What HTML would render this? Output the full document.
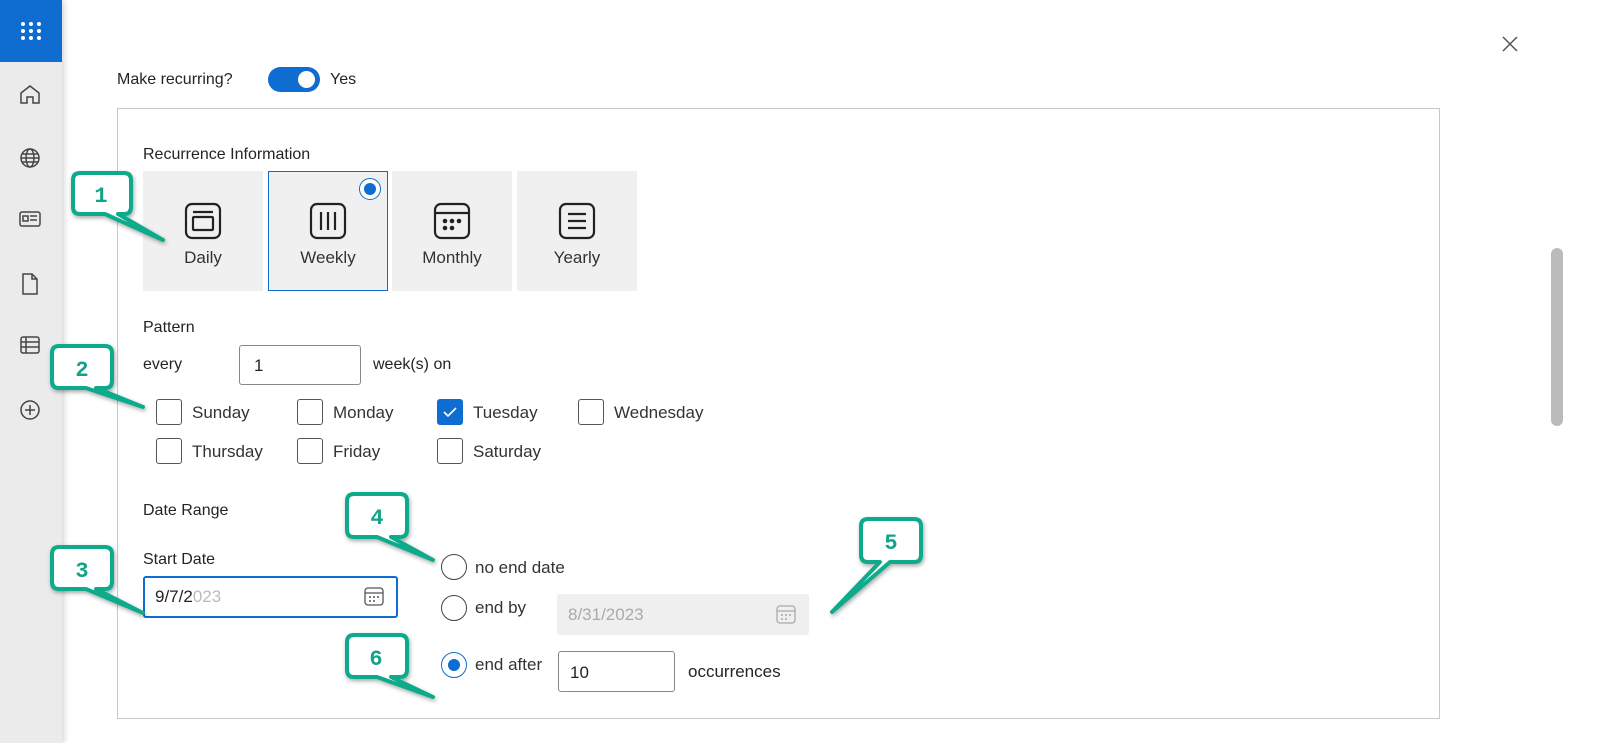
<!DOCTYPE html>
<html><head><meta charset="utf-8"><style>
*{box-sizing:border-box;margin:0;padding:0}
body{width:1600px;height:743px;overflow:hidden;background:#fff;font-family:"Liberation Sans",sans-serif;color:#242424;position:relative}
.abs{position:absolute}
.side{left:0;top:0;width:62px;height:743px;background:#ebebeb;box-shadow:2px 0 6px rgba(0,0,0,.18)}
.tile{position:absolute;top:171px;width:120px;height:120px;background:#f0f0f0;text-align:center;font-size:17px;color:#333}
.tile span{position:absolute;left:0;right:0;top:77px}
.tile svg{position:absolute;left:41px;top:31px}
.lbl{font-size:16px;position:absolute}
.cb{position:absolute;width:26px;height:26px;border:1px solid #555;border-radius:3px;background:#fff}
.day{position:absolute;font-size:17px;color:#333}
.rad{position:absolute;width:26px;height:26px;border:1px solid #444;border-radius:50%}
.inp{position:absolute;border:1px solid #888;border-radius:3px;background:#fff;font-size:17px;padding-left:14px}
</style></head><body>
<div class="abs side"></div>
<div class="abs" style="left:0;top:0;width:62px;height:62px;background:#0f6cd0"></div>
<svg class="abs" style="left:20px;top:21px" width="22" height="20"><g fill="#fff"><circle cx="3" cy="3" r="2"/><circle cx="11" cy="3" r="2"/><circle cx="19" cy="3" r="2"/><circle cx="3" cy="10" r="2"/><circle cx="11" cy="10" r="2"/><circle cx="19" cy="10" r="2"/><circle cx="3" cy="17" r="2"/><circle cx="11" cy="17" r="2"/><circle cx="19" cy="17" r="2"/></g></svg>
<svg class="abs" style="left:18px;top:84px" width="24" height="340" fill="none" stroke="#444" stroke-width="1.5">
<path d="M3 19V9l9-7 9 7v10h-6v-6h-6v6z"/>
<circle cx="12" cy="74" r="9"/><ellipse cx="12" cy="74" rx="4" ry="9"/><path d="M3 74h18M4 70h16M4 78h16"/>
<rect x="2" y="128" width="20" height="14" rx="2"/><path d="M5 132h5v5H5zM12 132h7M12 136h7"/>
<path d="M5 190h9l5 5v15H5z"/><path d="M14 190v5h5"/>
<rect x="3" y="253" width="18" height="16" rx="2"/><path d="M3 258h18M3 263h18M8 253v16"/>
<circle cx="12" cy="326" r="9"/><path d="M12 321v10M7 326h10"/>
</svg>
<svg class="abs" style="left:1502px;top:36px" width="16" height="16" stroke="#555" stroke-width="1.5"><path d="M1 1l14 14M15 1L1 15"/></svg>
<div class="abs" style="left:1551px;top:248px;width:12px;height:178px;background:#bbb;border-radius:6px"></div>

<div class="lbl" style="left:117px;top:71px">Make recurring?</div>
<div class="abs" style="left:268px;top:67px;width:52px;height:25px;border-radius:13px;background:#0f6cd0"></div>
<div class="abs" style="left:298px;top:71px;width:17px;height:17px;border-radius:50%;background:#fff"></div>
<div class="lbl" style="left:330px;top:71px">Yes</div>

<div class="abs" style="left:117px;top:108px;width:1323px;height:611px;border:1px solid #c8c8c8"></div>
<div class="lbl" style="left:143px;top:146px">Recurrence Information</div>

<div class="tile" style="left:143px"><svg width="38" height="38" fill="none" stroke="#222" stroke-width="2.2"><rect x="2" y="2" width="34" height="34" rx="6"/><rect x="9" y="15" width="20" height="13" rx="1"/><path d="M9 10h20"/></svg><span>Daily</span></div>
<div class="tile" style="left:268px;border:1px solid #0f6cd0"><svg width="38" height="38" fill="none" stroke="#222" stroke-width="2.2" style="left:40px;top:30px"><rect x="2" y="2" width="34" height="34" rx="6"/><path d="M12 10v18M19 10v18M26 10v18"/></svg><span style="top:76px">Weekly</span>
<div style="position:absolute;left:90px;top:6px;width:22px;height:22px;border-radius:50%;border:1px solid #0f6cd0;background:#fff"><div style="position:absolute;left:4px;top:4px;width:12px;height:12px;border-radius:50%;background:#0f6cd0"></div></div></div>
<div class="tile" style="left:392px"><svg width="38" height="38" fill="none" stroke="#222" stroke-width="2.2"><rect x="2" y="2" width="34" height="34" rx="6"/><path d="M2 11h34"/><g fill="#222" stroke="none"><circle cx="12" cy="19" r="2.3"/><circle cx="19" cy="19" r="2.3"/><circle cx="26" cy="19" r="2.3"/><circle cx="12" cy="26" r="2.3"/><circle cx="19" cy="26" r="2.3"/></g></svg><span>Monthly</span></div>
<div class="tile" style="left:517px"><svg width="38" height="38" fill="none" stroke="#222" stroke-width="2.2"><rect x="2" y="2" width="34" height="34" rx="6"/><path d="M10 12h18M10 19h18M10 26h18"/></svg><span>Yearly</span></div>

<div class="lbl" style="left:143px;top:319px">Pattern</div>
<div class="lbl" style="left:143px;top:356px">every</div>
<div class="inp" style="left:239px;top:345px;width:122px;height:40px;line-height:40px">1</div>
<div class="lbl" style="left:373px;top:356px">week(s) on</div>

<div class="cb" style="left:156px;top:399px"></div><div class="day" style="left:192px;top:403px">Sunday</div>
<div class="cb" style="left:297px;top:399px"></div><div class="day" style="left:333px;top:403px">Monday</div>
<div class="cb" style="left:437px;top:399px;background:#0f6cd0;border-color:#0f6cd0"><svg width="24" height="24" fill="none" stroke="#fff" stroke-width="1.6"><path d="M6 12l4 4 8-8"/></svg></div><div class="day" style="left:473px;top:403px">Tuesday</div>
<div class="cb" style="left:578px;top:399px"></div><div class="day" style="left:614px;top:403px">Wednesday</div>
<div class="cb" style="left:156px;top:438px"></div><div class="day" style="left:192px;top:442px">Thursday</div>
<div class="cb" style="left:297px;top:438px"></div><div class="day" style="left:333px;top:442px">Friday</div>
<div class="cb" style="left:437px;top:438px"></div><div class="day" style="left:473px;top:442px">Saturday</div>

<div class="lbl" style="left:143px;top:502px">Date Range</div>
<div class="lbl" style="left:143px;top:551px">Start Date</div>
<div class="inp" style="left:143px;top:576px;width:255px;height:42px;line-height:38px;border:2px solid #0f6cd0;padding-left:10px">9/7/2<span style="color:#bbb">023</span></div>
<svg class="abs" style="left:364px;top:587px" width="20" height="20" fill="none" stroke="#555" stroke-width="1.3"><rect x="1" y="1" width="18" height="17" rx="3"/><path d="M1 6h18"/><g fill="#555" stroke="none"><circle cx="6" cy="10" r="1"/><circle cx="10" cy="10" r="1"/><circle cx="14" cy="10" r="1"/><circle cx="6" cy="14" r="1"/><circle cx="10" cy="14" r="1"/></g></svg>

<div class="rad" style="left:441px;top:554px"></div><div class="day" style="left:475px;top:558px">no end date</div>
<div class="rad" style="left:441px;top:595px"></div><div class="day" style="left:475px;top:598px">end by</div>
<div class="abs" style="left:557px;top:594px;width:252px;height:41px;background:#efefef;border-radius:3px;color:#aaa;font-size:17px;line-height:41px;padding-left:11px">8/31/2023</div>
<svg class="abs" style="left:776px;top:605px" width="20" height="20" fill="none" stroke="#aaa" stroke-width="1.3"><rect x="1" y="1" width="18" height="17" rx="3"/><path d="M1 6h18"/><g fill="#aaa" stroke="none"><circle cx="6" cy="10" r="1"/><circle cx="10" cy="10" r="1"/><circle cx="14" cy="10" r="1"/><circle cx="6" cy="14" r="1"/><circle cx="10" cy="14" r="1"/></g></svg>
<div class="rad" style="left:441px;top:652px;border-color:#0f6cd0"><div style="position:absolute;left:6px;top:6px;width:12px;height:12px;border-radius:50%;background:#0f6cd0"></div></div><div class="day" style="left:475px;top:655px">end after</div>
<div class="inp" style="left:558px;top:651px;width:117px;height:41px;line-height:41px;padding-left:11px">10</div>
<div class="lbl" style="left:688px;top:662px;font-size:17px">occurrences</div>

<svg class="abs" style="left:0;top:0" width="1600" height="743">
<defs><filter id="sh"><feDropShadow dx="1" dy="2" stdDeviation="2" flood-opacity=".35"/></filter></defs>
<g fill="#fff" stroke="#10ab8b" stroke-width="4" stroke-linejoin="round" filter="url(#sh)">
<path d="M80 173h44q7 0 7 7v27q0 7-7 7H118L163 240 105 214H80q-7 0-7-7v-27q0-7 7-7z"/>
<path d="M59 346h46q7 0 7 7v28q0 7-7 7H96L143 407 86 388H59q-7 0-7-7v-28q0-7 7-7z"/>
<path d="M59 547h46q7 0 7 7v28q0 7-7 7H96L143 613 86 589H59q-7 0-7-7v-28q0-7 7-7z"/>
<path d="M354 494h46q7 0 7 7v29q0 7-7 7H391L433 560 377 537H354q-7 0-7-7v-29q0-7 7-7z"/>
<path d="M868 519h46q7 0 7 7v29q0 7-7 7H890L832 612 880 562H868q-7 0-7-7v-29q0-7 7-7z"/>
<path d="M354 635h46q7 0 7 7v28q0 7-7 7H391L433 697 377 677H354q-7 0-7-7v-28q0-7 7-7z"/>
</g>
<g fill="#13a386" font-family="Liberation Mono,monospace" font-weight="bold" font-size="22" text-anchor="middle">
<text x="101" y="202">1</text><text x="82" y="376">2</text><text x="82" y="577">3</text>
<text x="377" y="524">4</text><text x="891" y="549">5</text><text x="376" y="665">6</text>
</g></svg>
</body></html>
